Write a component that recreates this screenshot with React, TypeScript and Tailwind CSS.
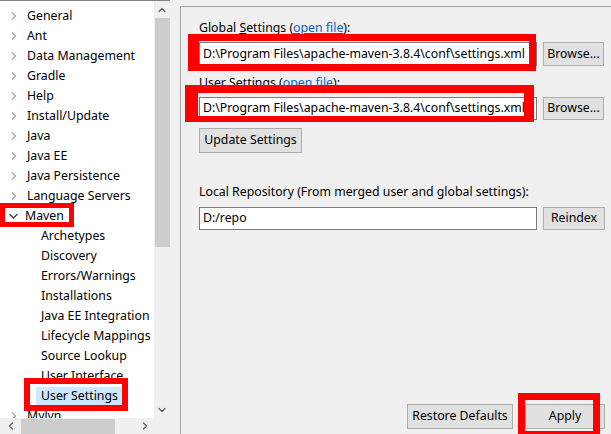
import { ChevronDown, ChevronLeft, ChevronRight, ChevronUp } from "lucide-react"

const TOP = [
  "General",
  "Ant",
  "Data Management",
  "Gradle",
  "Help",
  "Install/Update",
  "Java",
  "Java EE",
  "Java Persistence",
  "Language Servers",
]

const MAVEN = [
  "Archetypes",
  "Discovery",
  "Errors/Warnings",
  "Installations",
  "Java EE Integration",
  "Lifecycle Mappings",
  "Source Lookup",
  "User Interface",
]

const PATH = "D:\\Program Files\\apache-maven-3.8.4\\conf\\settings.xml"

function Closed() {
  return (
    <svg width="8" height="8" viewBox="0 0 8 8" className="shrink-0">
      <path d="M2 0.5 L5.5 4 L2 7.5" fill="none" stroke="#a6a6a6" strokeWidth="1.3" />
    </svg>
  )
}

function Open() {
  return (
    <svg width="9" height="8" viewBox="0 0 9 8" className="shrink-0">
      <path d="M0.5 2 L4.5 6 L8.5 2" fill="none" stroke="#404040" strokeWidth="1.4" />
    </svg>
  )
}

function Btn({ label, className }: { label: string; className: string }) {
  return (
    <button className={`flex items-center justify-center border border-[#adadad] bg-[#e1e1e1] text-[12.3px] text-black ${className}`}>
      {label}
    </button>
  )
}

function Field({ value, className }: { value: string; className: string }) {
  return (
    <div className={`flex items-center overflow-hidden border border-[#7a7a7a] bg-white pl-[3px] text-[12.3px] text-black ${className}`}>
      <span className="whitespace-nowrap">{value}</span>
    </div>
  )
}

export default function App() {
  return (
    <div
      className="relative flex h-[434px] w-[611px] overflow-hidden bg-[#f0f0f0] text-[12.3px] text-black"
      style={{ fontFamily: '"Noto Sans", "Noto Sans CJK SC", sans-serif' }}
    >
      {/* tree */}
      <div className="flex w-[170px] shrink-0 flex-col border-t border-[#828282]">
        <div className="flex min-h-0 flex-1">
          <div className="w-[154px] overflow-hidden bg-white pt-[5px]">
            {TOP.map((t) => (
              <div key={t} className="flex h-[20px] items-center gap-[9px] whitespace-nowrap pl-[10px]">
                <Closed />
                <span>{t}</span>
              </div>
            ))}
            <div className="flex h-[20px] items-center gap-[7px] whitespace-nowrap pl-[9px]">
              <Open />
              <span>Maven</span>
            </div>
            {MAVEN.map((t) => (
              <div key={t} className="flex h-[20px] items-center whitespace-nowrap pl-[41px]">
                {t}
              </div>
            ))}
            <div className="flex h-[20px] items-center whitespace-nowrap pl-[36px]">
              <span className="bg-[#cce8ff] px-[5px] leading-[18px]">User Settings</span>
            </div>
            <div className="flex h-[20px] items-center gap-[9px] whitespace-nowrap pl-[10px]">
              <Closed />
              <span>Mylyn</span>
            </div>
          </div>
          <div className="flex w-[16px] flex-col items-center bg-[#f0f0f0]">
            <div className="flex h-[17px] items-center">
              <ChevronUp size={12} strokeWidth={2.5} color="#606060" />
            </div>
            <div className="h-[229px] w-[15px] bg-[#cdcdcd]" />
            <div className="flex-1" />
            <div className="flex h-[17px] items-center">
              <ChevronDown size={12} strokeWidth={2.5} color="#606060" />
            </div>
          </div>
        </div>
        <div className="flex h-[16px] w-[154px] items-center bg-[#f0f0f0]">
          <div className="flex w-[21px] justify-center">
            <ChevronLeft size={12} strokeWidth={2.5} color="#606060" />
          </div>
          <div className="h-[15px] w-[94px] bg-[#cdcdcd]" />
          <div className="flex-1" />
          <div className="flex w-[18px] justify-center">
            <ChevronRight size={12} strokeWidth={2.5} color="#606060" />
          </div>
        </div>
      </div>

      {/* settings page */}
      <div className="ml-[10px] mt-[6px] flex flex-1 flex-col border-l border-t border-[#a0a0a0] pl-[18px] pr-[6px]">
        <div className="mt-[11px] h-[20px] leading-[20px]">
          Global <span className="underline">S</span>ettings (<span className="text-[#0066cc] underline">open file</span>):
        </div>
        <div className="mt-[4px] flex gap-[6px]">
          <Field value={PATH} className="h-[24px] w-[338px]" />
          <Btn label="Browse..." className="h-[24px] w-[61px]" />
        </div>
        <div className="mt-[7px] h-[20px] leading-[20px]">
          User Settings (<span className="text-[#0066cc] underline">open file</span>):
        </div>
        <div className="mt-[4px] flex gap-[6px]">
          <Field value={PATH} className="h-[23px] w-[338px]" />
          <Btn label="Browse..." className="h-[23px] w-[61px]" />
        </div>
        <Btn label="Update Settings" className="mt-[8px] h-[25px] w-[103px]" />
        <div className="mt-[29px] h-[20px] leading-[20px]">
          Local Repository (From merged user and global settings):
        </div>
        <div className="mt-[5px] flex gap-[6px]">
          <Field value="D:/repo" className="h-[23px] w-[338px]" />
          <Btn label="Reindex" className="h-[23px] w-[62px]" />
        </div>
        <div className="flex-1" />
        <div className="mb-[5px] flex justify-end gap-[12px]">
          <Btn label="Restore Defaults" className="h-[25px] w-[106px]" />
          <Btn label="Apply" className="h-[25px] w-[80px]" />
        </div>
      </div>

      {/* red annotation boxes */}
      <div className="pointer-events-none absolute left-[0px] top-[203px] h-[24px] w-[74px] border-[5px] border-[#ff0000]" />
      <div className="pointer-events-none absolute left-[24px] top-[378px] h-[33px] w-[104px] border-[6px] border-[#ff0000]" />
      <div className="pointer-events-none absolute left-[188px] top-[34px] h-[37px] w-[348px] border-[7px] border-l-[11px] border-[#ff0000]" />
      <div className="pointer-events-none absolute left-[185px] top-[85px] h-[37px] w-[349px] border-[7px] border-l-[13px] border-r-[10px] border-t-[8px] border-b-[6px] border-[#ff0000]" />
      <div className="pointer-events-none absolute left-[518px] top-[393px] h-[45px] w-[82px] border-[7px] border-[#ff0000]" />
    </div>
  )
}
